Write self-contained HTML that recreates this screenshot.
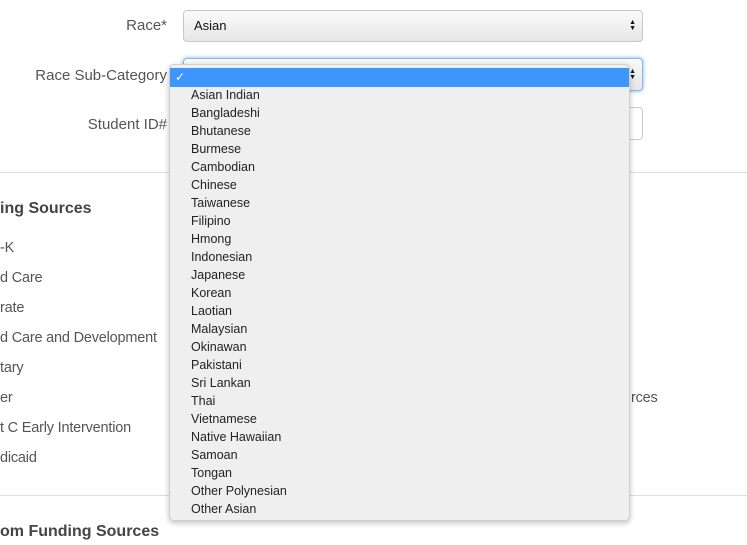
<!DOCTYPE html>
<html><head><style>
body{margin:0;width:747px;height:545px;background:#fff;position:relative;overflow:hidden;font-family:"Liberation Sans",sans-serif;}
.a{position:absolute;white-space:nowrap}
.lbl{color:#555;font-size:15px;text-align:right}
.sel{position:absolute;border:1px solid #c8c8c8;border-radius:4px;background:linear-gradient(#fafafa,#e6e6e6);box-sizing:border-box}
.arr{position:absolute;right:6px;top:50%;margin-top:-6px;font-size:7px;line-height:6px;color:#111}
.li{color:#555;font-size:14.5px;letter-spacing:-0.2px}
hr{position:absolute;border:0;border-top:1px solid #ddd;margin:0;left:0;width:747px}
.dd{position:absolute;left:169px;top:64px;width:461px;height:457px;background:#efefef;border:1px solid #cfcfcf;border-radius:5px;box-shadow:0 2px 6px rgba(0,0,0,.25);box-sizing:border-box}
.it{position:absolute;left:21px;font-size:12.5px;color:#222;line-height:18px}
</style></head><body>
<div class="a lbl" style="right:580px;top:17px">Race*</div>
<div class="sel" style="left:183px;top:10px;width:460px;height:32px"><span class="a" style="left:10px;top:7px;font-size:13px;color:#111">Asian</span><div class="arr">▲<br>▼</div></div>
<div class="a lbl" style="right:580px;top:67px">Race Sub-Category</div>
<div class="sel" style="left:183px;top:58px;width:460px;height:33px;border-color:#8ab8ea;box-shadow:0 0 3px 1px #a9cdf3"><div class="arr">▲<br>▼</div></div>
<div class="a lbl" style="right:580px;top:116px">Student ID#</div>
<div class="a" style="left:183px;top:107px;width:460px;height:33px;border:1px solid #ccc;border-radius:4px;box-sizing:border-box"></div>
<hr style="top:172px">
<div class="a" style="left:0;top:200px;font-size:16px;font-weight:bold;color:#444">ing Sources</div>
<div class="a li" style="left:0;top:240px">-K</div>
<div class="a li" style="left:0;top:270px">d Care</div>
<div class="a li" style="left:0;top:300px">rate</div>
<div class="a li" style="left:0;top:330px">d Care and Development</div>
<div class="a li" style="left:0;top:360px">tary</div>
<div class="a li" style="left:0;top:390px">er</div>
<div class="a li" style="left:0;top:420px">t C Early Intervention</div>
<div class="a li" style="left:0;top:450px">dicaid</div>
<div class="a li" style="left:631px;top:390px">rces</div>
<hr style="top:495px">
<div class="a" style="left:0;top:523px;font-size:16px;font-weight:bold;color:#444">om Funding Sources</div>
<div class="dd">
<div class="a" style="left:0;top:3px;width:459px;height:19px;background:#3d96fc;color:#fff;font-size:12px;line-height:19px;padding-left:5px;box-sizing:border-box">✓</div>
<div class="it" style="top:21px">Asian Indian</div>
<div class="it" style="top:39px">Bangladeshi</div>
<div class="it" style="top:57px">Bhutanese</div>
<div class="it" style="top:75px">Burmese</div>
<div class="it" style="top:93px">Cambodian</div>
<div class="it" style="top:111px">Chinese</div>
<div class="it" style="top:129px">Taiwanese</div>
<div class="it" style="top:147px">Filipino</div>
<div class="it" style="top:165px">Hmong</div>
<div class="it" style="top:183px">Indonesian</div>
<div class="it" style="top:201px">Japanese</div>
<div class="it" style="top:219px">Korean</div>
<div class="it" style="top:237px">Laotian</div>
<div class="it" style="top:255px">Malaysian</div>
<div class="it" style="top:273px">Okinawan</div>
<div class="it" style="top:291px">Pakistani</div>
<div class="it" style="top:309px">Sri Lankan</div>
<div class="it" style="top:327px">Thai</div>
<div class="it" style="top:345px">Vietnamese</div>
<div class="it" style="top:363px">Native Hawaiian</div>
<div class="it" style="top:381px">Samoan</div>
<div class="it" style="top:399px">Tongan</div>
<div class="it" style="top:417px">Other Polynesian</div>
<div class="it" style="top:435px">Other Asian</div>
</div>
</body></html>
